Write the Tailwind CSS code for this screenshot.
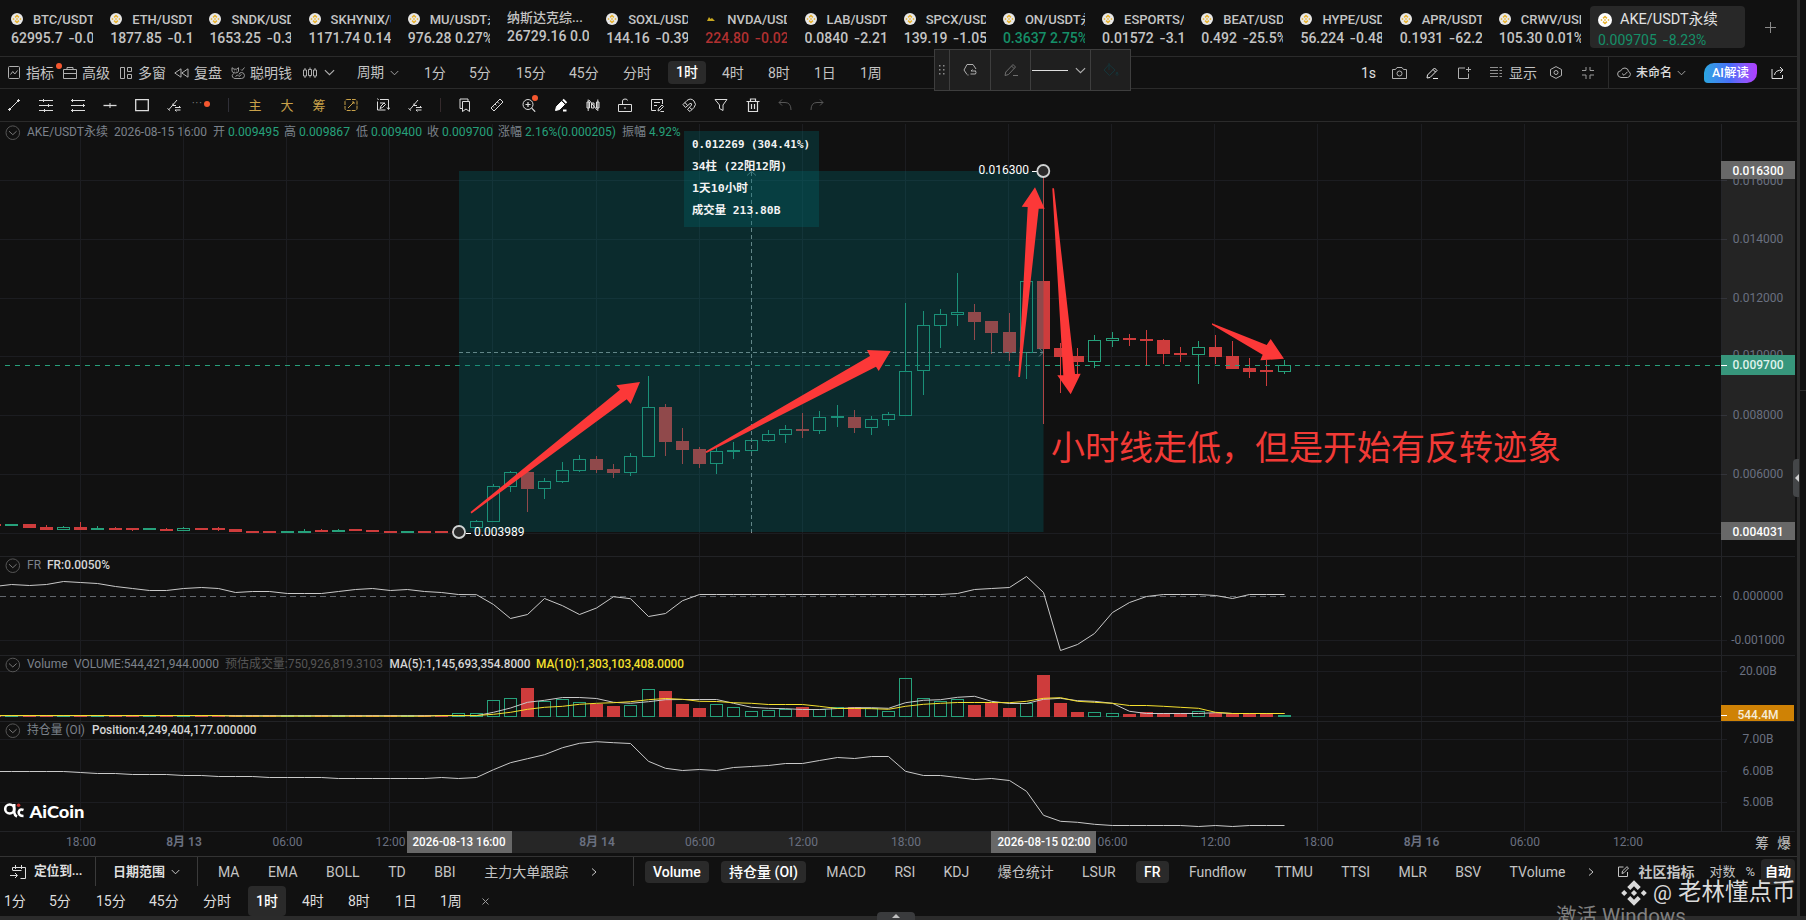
<!DOCTYPE html>
<html lang="zh-CN">

<head>
    <meta charset="UTF-8" />
    <meta name="viewport" content="width=device-width, initial-scale=1.0" />
    <title>AKE/USDT永续 - AiCoin</title>
    <script src="https://cdn.jsdelivr.net/npm/@tailwindcss/browser@4"></script>
</head>

<body class="w-[1806px] h-[920px] overflow-hidden bg-[#111111] text-[#c4c4c4] text-sm leading-none font-[family-name:Roboto,'Noto_Sans_CJK_SC',sans-serif]">
    <svg class="hidden">
        <symbol id="bnb" viewBox="0 0 24 24">
            <path d="M12 1 6.2 6.8 8.8 9.4 12 6.2l3.2 3.2 2.6-2.6zM12 23l-5.8-5.8 2.6-2.6 3.2 3.2 3.2-3.2 2.6 2.6zM3.6 9.4 1 12l2.6 2.6L6.2 12zM20.4 9.4 17.8 12l2.6 2.6L23 12zM12 9.4 9.4 12l2.6 2.6 2.6-2.6z" />
        </symbol>
        <symbol id="down" viewBox="0 0 10 6">
            <path d="M.8.8 5 5 9.2.8" fill="none" stroke="currentColor" />
        </symbol>
    </svg>

    <div class="relative flex w-[1806px] h-[920px]">
        <main class="w-[1797px] h-[916px] shrink-0 flex flex-col">

            <!-- symbol tabs -->
            <div class="flex h-[57px] shrink-0 border-b border-[#2b2b2b]">
                <div id="tabs" class="flex pl-[11px]"></div>
                <div class="w-[155px] h-[42px] mt-1.5 -ml-[8px] shrink-0 rounded bg-[#282828] pl-2 pt-1.5 whitespace-nowrap">
                    <div class="flex items-center h-4 text-[#e2e2e2]">
                        <span class="size-3.5 rounded-full bg-white flex items-center justify-center"><svg class="size-2.5 fill-[#e8b22c]"><use href="#bnb" /></svg></span>
                        <span class="ml-2 text-[14.5px]">AKE/USDT永续</span>
                    </div>
                    <div class="mt-1 h-4 leading-4 text-[#158f68]">0.009705 <span class="ml-0.5 font-[family-name:Inter]">-</span>8.23%</div>
                </div>
                <svg class="ml-5 mt-[22px] size-[11px] stroke-[#8a8a8a] fill-none" viewBox="0 0 11 11"><path d="M5.5 0v11M0 5.5h11" /></svg>
            </div>

            <!-- main toolbar -->
            <div class="flex items-center h-8 shrink-0 border-b border-[#2b2b2b] whitespace-nowrap">
                <div class="flex items-center w-[63px] pl-2 relative">
                    <svg class="w-3 h-[13px] mr-1.5 fill-none stroke-[#b0b0b0]" viewBox="0 0 12 13"><rect x=".5" y=".5" width="11" height="12" rx="1" /><path d="m2.5 8.5 2.3-3 2 2.5 2.7-3.5" /></svg>指标
                    <span class="absolute left-14 -top-[3px] size-1.5 rounded-full bg-[#f5572f]"></span>
                </div>
                <div class="flex items-center w-[57px]">
                    <svg class="w-3.5 h-3 mr-[5px] fill-none stroke-[#b0b0b0]" viewBox="0 0 14 12"><path d="M.5 2.5h13v9H.5zM4 2.5V.5h6v2M.5 6.5h13" /></svg>高级
                </div>
                <div class="flex items-center w-[54px]">
                    <svg class="w-3 h-3 mr-[6px] fill-none stroke-[#b0b0b0]" viewBox="0 0 12 12"><path d="M.5.5h4v11h-4zM7.5.5h4v4h-4zM7.5 7.5h4v4h-4z" /></svg>多窗
                </div>
                <div class="flex items-center w-[57px]">
                    <svg class="w-[15px] h-2.5 mr-[5px] fill-none stroke-[#b0b0b0]" viewBox="0 0 15 10"><path d="M7 .8v8.4L.8 5zM14 .8v8.4L7.8 5z" /></svg>复盘
                </div>
                <div class="flex items-center w-[72px]">
                    <svg class="w-3.5 h-3 mr-[5px] fill-none stroke-[#9a9a9a]" viewBox="0 0 14 12"><path d="M1 4V.7L3 2.200h2.500L7.500.7V4q0 2-3.200 2T1 4M3 4h.6M5 4h.6M10 2.500l1 1 2.500-3M2.500 6.500Q.5 8.500 1.500 10t2.500 1.500h6.500q3 0 3-3.200-.5-2.800-3-2.800-2 0-2.500 2" /><path d="m4.500 9.500 2-1.500L8 9.500 10.500 7.500" /></svg>聪明钱
                </div>
                <svg class="w-3.5 h-3 fill-none stroke-[#b0b0b0]" viewBox="0 0 14 12"><path d="M.5 3h3v6h-3zM5.500 2.500h3v6h-3zM10.500 3h3v6h-3zM2 1v2M2 9v2M7 .500v2M7 8.500v2M12 1v2M12 9v2" /></svg>
                <svg class="w-[11px] h-[7px] ml-[7px] text-[#b0b0b0]"><use href="#down" /></svg>
                <span class="ml-[22px] text-[13.5px]">周期</span>
                <svg class="w-[9px] h-1.5 ml-1.5 text-[#b0b0b0]"><use href="#down" /></svg>
                <div class="flex items-center ml-[25px]">
                    <span class="w-[45px]">1分</span><span class="w-[47px]">5分</span><span class="w-[53px]">15分</span><span class="w-[54px]">45分</span><span class="w-[45px]">分时</span>
                    <span class="w-[38px] h-[23px] leading-[22px] rounded bg-[#2a2a2a] text-white font-medium text-center">1时</span>
                    <span class="ml-4 w-[46px]">4时</span><span class="w-[46px]">8时</span><span class="w-[46px]">1日</span><span>1周</span>
                </div>
                <div class="flex items-center ml-auto h-full">
                    <span class="w-[31px] text-[#e0e0e0]">1s</span>
                    <svg class="w-[15px] h-3 fill-none stroke-[#b0b0b0]" viewBox="0 0 15 12"><path d="M.5 2.500h3l1.500-2h5l1.500 2h3v9H.5z" /><circle cx="7.500" cy="6.500" r="2.500" /></svg>
                    <svg class="w-3 h-3 ml-[19px] fill-none stroke-[#e8e8e8]" viewBox="0 0 12 12"><path d="M1 11 1.500 8 8.500 1l2.500 2.500-7 7zM7 2.500 9.500 5M7 11.500h5" /></svg>
                    <svg class="w-[13px] h-3 ml-5 fill-none stroke-[#b0b0b0]" viewBox="0 0 13 12"><path d="M7 1H.5v10.500h10V6.500M10.500 0v5M8 2.500h5" /></svg>
                    <svg class="w-3 h-[11px] ml-[19px] fill-none stroke-[#8f8f8f]" viewBox="0 0 12 11"><path d="M0 .5h8M0 3.500h8M0 6.500h8M0 9.500h8M9.500 .5H12M9.500 3.500H12M9.500 6.500H12M9.500 9.500H12" /></svg>
                    <span class="ml-[7px]">显示</span>
                    <svg class="w-3 h-[13px] ml-[13px] fill-none stroke-[#b0b0b0]" viewBox="0 0 12 13"><path d="M6 .6 11.500 3.500v6L6 12.400.5 9.500v-6z" /><circle cx="6" cy="6.500" r="2" /></svg>
                    <svg class="w-3 h-3 ml-5 fill-none stroke-[#9a9a9a]" viewBox="0 0 12 12"><path d="M0 3.500h4V0M8 0v3.500h4M12 8H8v4M4 12V8H0" /></svg>
                    <div class="flex items-center h-full ml-[14px] pl-2 border-l border-[#2b2b2b]">
                        <svg class="w-3.5 h-3 fill-none stroke-[#b0b0b0]" viewBox="0 0 14 12"><path d="M4 10.500Q.6 10 .6 7t3.200-3.200Q5 .8 8 1q3.200.3 3.600 3.500 2 .8 1.800 3-.4 2.600-2.900 3zM5 6.500l2 1.800 3.500-3.500" /></svg>
                        <span class="ml-[5px] text-xs font-medium text-[#dedede]">未命名</span>
                        <svg class="w-[9px] h-1.5 ml-[5px] text-[#b0b0b0]"><use href="#down" /></svg>
                        <span class="ml-[18px] w-[53px] h-5 leading-5 rounded-tl-[10px] rounded-br-[10px] rounded-tr-sm rounded-bl-sm bg-linear-to-r from-[#2aa5e0] via-[#4a6cf8] to-[#b03cff] text-white text-center text-[12.500px] font-medium">AI解读</span>
                        <svg class="w-[13px] h-3 ml-3.5 mr-[13px] fill-none stroke-[#e0e0e0]" viewBox="0 0 13 12"><path d="M1 2v9.500h10.500V8M3.500 8q.5-5 8-5M9 0l3 3-3 3" /></svg>
                    </div>
                </div>
            </div>

            <!-- drawing toolbar -->
            <div class="h-[33px] shrink-0 border-b border-[#2b2b2b] flex items-center pl-px text-[#dcdcdc] [&>svg]:size-3.5 [&>svg]:mr-[18px] [&>svg]:shrink-0 [&>svg]:fill-none [&>svg]:stroke-current [&>b]:w-8 [&>b]:font-normal [&>b]:text-[#c9a24a] [&>b]:text-[13px] [&>b]:text-center">
                <svg class="ml-1.5" viewBox="0 0 14 14"><path d="M2.500 11.500 11.500 2.500M1 11.500h3M2.500 10v3M10 2.500h3M11.500 1v3" /></svg>
                <svg viewBox="0 0 14 14"><path d="M0 2.500h14M0 7.500h14M0 12.500h14M4.500 1v3M9.500 6v3M5.500 11v3" /></svg>
                <svg viewBox="0 0 14 14"><path d="M0 2.500h14M0 7.500h14M0 12.500h14M1.500 1v3M12.500 6v3M1.500 11v3" /></svg>
                <svg viewBox="0 0 14 14"><path d="M.5 7.500h13" stroke-width="1.300" /><path d="M7 5v5" /></svg>
                <svg viewBox="0 0 14 14"><path d="M.7 1.700h12.600v11H.7z" stroke-width="1.300" /></svg>
                <svg viewBox="0 0 14 14"><path d="M2 11.500 10 2M.5 10.500l2.500 2M6 5.500v2h3M8 9.500h5.500l-1.500-1.500M13.500 12H8l1.500 1.500" /></svg>
                <div class="relative w-8 h-3.5 -ml-2 mr-1.5"><span class="absolute left-px top-0 tracking-[1px] text-[10px] leading-3 text-[#8a8a8a]">···</span><span class="absolute left-[13px] top-[3px] size-1.5 rounded-full bg-[#f5572f]"></span></div>
                <span class="w-px h-3.5 bg-[#303038] mr-2.5 -ml-[1px]"></span>
                <b>主</b><b>大</b><b>筹</b>
                <svg class="ml-[9px] text-[#c9a24a]" viewBox="0 0 14 14"><rect x="1" y="1.500" width="12" height="11" rx="2" stroke-dasharray="4 1" /><path d="m4 10 6-6M8 4h2v2" /></svg>
                <svg viewBox="0 0 14 14"><path d="M4 1.500h8.500V11M1.500 3.500V12h8M2.500 2 1.500.5M4 5h5M4 10.500l1-2.500 3-3 1.500 1.500-3 3zM11 9.500l1.500 2 1.500-2" /></svg>
                <svg viewBox="0 0 14 14"><path d="M2 11.500 10 2M.5 10.500l2.500 2M6 5.500v2h3M8 9.500h5.500l-1.500-1.500M13.500 12H8l1.500 1.500" /></svg>
                <span class="w-px h-3.5 bg-[#352a2c] mr-[17px]"></span>
                <svg viewBox="0 0 14 14"><path d="M4.500 3.500h7v10L8 11l-3.500 2.500zM4 10.500H2V1h8v2" /></svg>
                <svg viewBox="0 0 14 14"><path d="M1 10 10 1l3 3-9 9zM5 6l1.500 1.500M7.500 4 9 5.500M3 8.500 4 9.500" /></svg>
                <span class="relative mr-[18px]"><svg class="size-3.5 fill-none stroke-current" viewBox="0 0 14 14"><circle cx="6" cy="6.500" r="5" /><path d="m9.700 10.200 3.500 3.500M3.500 6.500h5M6 4v5" stroke-width="1.200" /></svg><span class="absolute left-[10px] -top-[3px] size-1.5 rounded-full bg-[#f5572f]"></span></span>
                <svg class="text-white" viewBox="0 0 14 14"><path d="M1.500 12.500 2.500 8.500l5-5L10.500 6.500l-5 5z" fill="currentColor" /><path d="M9 12.500h3.500M9 1.500l3.500 3.500" stroke-width="2" /></svg>
                <svg viewBox="0 0 14 14"><path d="M1 4h2.500v6H1zM5.500 5H8v5H5.500zM10.500 4H13v6h-2.500zM2.200 1.500V13M11.800 1.500V13M3 2l8 10" /></svg>
                <svg viewBox="0 0 14 14"><path d="M.5 6.500h13v7H.5zM4.500 6V3q0-2 2.500-2t2.500 1.500M7 9v2" /></svg>
                <svg viewBox="0 0 14 14"><path d="M12.500 6V1.500h-11v11H6M4 4.500h6M4 7.500h3M8 13l.5-2.500L12 7l1.500 1.500L10 12zM10.500 13.500H14" /></svg>
                <svg viewBox="0 0 14 14"><path d="M1 6.500 5 2.500q4-3 7 .5t0 6.500L8 13.500 5.500 11.500l4-4.500q.5-2-1.500-1.500L3.500 9.500zM3 4.500l2.500 3M7.500 9.500l2.500 2" /></svg>
                <svg viewBox="0 0 14 14"><path d="M1 1.500h12L9 7v5.500L5.500 10.500V7z" /></svg>
                <svg viewBox="0 0 14 14"><path d="M.5 3.500h13M2.500 3.500v10h9v-10M4.500 3V1h5v2M5.500 6v5M8.500 6v5" stroke-width="1.200" /></svg>
                <svg class="text-[#565656]" viewBox="0 0 14 14"><path d="M4 1.500 1 4.500l3 3M1 4.500h6q6 0 6 7.500" /></svg>
                <svg class="text-[#565656]" viewBox="0 0 14 14"><path d="m10 1.500 3 3-3 3M13 4.500H7q-6 0-6 7.500" /></svg>
            </div>

            <!-- chart area, drawn by the script below -->
            <svg id="chart" class="block w-[1797px] h-[734px] shrink-0 text-xs" viewBox="0 122 1797 734"></svg>

            <!-- indicator bar -->
            <div class="flex items-center h-[30px] shrink-0 border-t border-[#333333] whitespace-nowrap">
                <div class="flex items-center w-[96px] h-full pl-2.5 border-r border-[#3a3a3a] text-[#dedede] font-bold text-[13px]">
                    <svg class="w-4 h-3.5 mr-2 fill-none stroke-current" viewBox="0 0 16 14"><path d="M2.500 5V2.500h13v11h-5M5.500 0v4M11.500 0v4M2.500 5.500h9M0 10.500h7M5 8l2.500 2.500L5 13" /></svg><span class="text-[12.800px] tracking-[-0.2px]">定位到...</span>
                </div>
                <div class="flex items-center w-[102px] h-full pl-[17px] border-r border-[#3a3a3a] text-[#dedede] font-bold text-[13px]">
                    日期范围<svg class="w-[9px] h-1.5 ml-1.5"><use href="#down" /></svg>
                </div>
                <div class="flex items-center gap-[28.600px] w-[436px] h-full pl-[20px] border-r border-[#3a3a3a]">
                    <span>MA</span><span>EMA</span><span>BOLL</span><span>TD</span><span>BBI</span><span>主力大单跟踪</span>
                    <svg class="w-1.5 h-2 -ml-1.5 fill-none stroke-current" viewBox="0 0 6 8"><path d="m1 .5 4 3.500-4 3.500" /></svg>
                </div>
                <div class="flex items-center gap-[28.400px] pl-[19px]">
                    <span class="-mx-2 px-2 h-[22px] leading-[22px] rounded bg-[#2a2a2a] text-white font-medium">Volume</span>
                    <span class="-mx-2 px-2 h-[22px] leading-[22px] rounded bg-[#2a2a2a] text-white font-medium">持仓量 (OI)</span>
                    <span>MACD</span><span>RSI</span><span>KDJ</span><span>爆仓统计</span><span>LSUR</span>
                    <span class="-mx-2 px-2 h-[22px] leading-[22px] rounded bg-[#2a2a2a] text-white font-medium">FR</span>
                    <span>Fundflow</span><span>TTMU</span><span>TTSI</span><span>MLR</span><span>BSV</span><span>TVolume</span>
                    <svg class="w-1.5 h-2 -ml-1.5 fill-none stroke-current" viewBox="0 0 6 8"><path d="m1 .5 4 3.500-4 3.500" /></svg>
                </div>
                <div class="flex items-center ml-auto pr-0.5">
                    <svg class="w-[11px] h-[11px] mr-[9px] fill-none stroke-current" viewBox="0 0 11 11"><path d="M5.500 1H.5v9.500h9V6M4 7.500 4.500 5 9 .7 10.500 2 6 6.700z" /></svg>
                    <span class="font-bold">社区指标</span>
                    <span class="ml-[15px] text-[13px]">对数</span>
                    <span class="ml-[10px] text-[13px]">%</span>
                    <span class="ml-[6px] w-[34px] h-[26px] leading-[26px] rounded bg-[#262626] text-white font-bold text-[13px] text-center">自动</span>
                </div>
            </div>

            <!-- period bar -->
            <div class="flex items-center h-[30px] shrink-0 pl-1 text-[#dedede] whitespace-nowrap">
                <span class="w-[45px]">1分</span><span class="w-[47px]">5分</span><span class="w-[53px]">15分</span><span class="w-[54px]">45分</span><span class="w-[45px]">分时</span>
                <span class="w-[38px] h-[30px] leading-[30px] rounded bg-[#2a2a2a] text-white font-medium text-center">1时</span>
                <span class="ml-4 w-[46px]">4时</span><span class="w-[47px]">8时</span><span class="w-[45px]">1日</span><span class="w-[42px]">1周</span>
                <svg class="size-[7px] fill-none stroke-[#9a9a9a]" viewBox="0 0 7 7"><path d="m.5.5 6 6M6.500.5l-6 6" /></svg>
            </div>
        </main>

        <!-- collapsed side panel -->
        <div class="w-[3px] h-full bg-[#2b2b2b]"></div>
        <div class="w-1.5 h-[391px] border-b border-[#2b2b2b]"></div>
        <div class="absolute left-0 top-[916px] w-full h-1 bg-[#2b2b2b]"></div>
        <div class="absolute left-[1793px] top-[459px] w-1.5 h-[38px] rounded-l bg-[#444648] flex items-center justify-end">
            <svg class="w-1 h-2 fill-[#d0d0d0]" viewBox="0 0 4 8"><path d="M4 0v8L0 4z" /></svg>
        </div>
        <div class="absolute left-[877px] top-[912px] w-[38px] h-2 rounded-t bg-[#3a3b3d] flex items-center justify-center">
            <svg class="w-2 h-1 fill-[#c0c0c0]" viewBox="0 0 8 4"><path d="M0 4h8L4 0z" /></svg>
        </div>

        <!-- floating style bar of the selected drawing -->
        <div class="absolute left-[934px] top-[49px] w-[197px] h-[42px] flex border border-[#3e3e3e] bg-[#1f1f1f] [&>div]:flex [&>div]:items-center [&>div]:justify-center [&>div]:border-[#3e3e3e] [&>div]:border-r">
            <div class="w-[15px]"><svg class="w-1.5 h-2.5 fill-[#8a8a8a]" viewBox="0 0 6 10"><path d="M0 0h1.500v1.500H0zM4 0h1.500v1.500H4zM0 4h1.500v1.500H0zM4 4h1.500v1.500H4zM0 8h1.500v1.500H0zM4 8h1.500v1.500H4z" /></svg></div>
            <div class="w-[41px]"><svg class="size-3.5 fill-none stroke-[#b0b0b0]" viewBox="0 0 14 14"><path d="M4 11.500 1 7l3-5.500h6L13 6M5 11.500v1M13 8H8l1.500-1.500M7.500 11h5q1-1.500 0-3" /></svg></div>
            <div class="w-[40px]"><svg class="size-3.5 fill-none stroke-[#6e6e6e]" viewBox="0 0 14 14"><path d="m1 12.500.8-3.500L9 1.500 11.500 4l-7 7.500zM7.500 3 10 5.500M9 12.500h5" /></svg></div>
            <div class="w-[60px]"><span class="w-9 h-px -ml-1 bg-[#dedede]"></span><svg class="w-[11px] h-[7px] ml-[7px] text-[#b0b0b0]"><use href="#down" /></svg></div>
            <div class="grow border-r-0!"><svg class="w-4 h-3.5 fill-none stroke-[#153439]" viewBox="0 0 16 14"><path d="M6 1.500 12 7l-5.500 5.500L1 7zM6 7V0M14 9q-2 3 0 3.500 2-.5 0-3.500" /></svg></div>
        </div>

        <div class="absolute left-[1620px] top-[879px] flex items-center h-7 text-[#dadada] text-[23.500px] whitespace-nowrap">
            <svg class="size-7 fill-current mr-[5px]"><use href="#bnb" /></svg>
            <span class="w-[25px] text-[21px]">@</span><span>老林懂点币</span>
        </div>
        <div class="absolute left-[1556px] top-[904px] text-[20.500px] leading-6 text-[#808080] whitespace-nowrap">激活 Windows</div>
    </div>

    <script>
        // name, last price, sign of the change, change, colour class, icon
        const tabs = [
            ["BTC/USDT永续", "62995.7", "-", "0.02%"],
            ["ETH/USDT永续", "1877.85", "-", "0.10%"],
            ["SNDK/USDT永续", "1653.25", "-", "0.35%"],
            ["SKHYNIX/USDT", "1171.74", "", "0.14%"],
            ["MU/USDT永续", "976.28", "", "0.27%"],
            ["纳斯达克综...", "26729.16", "", "0.01%", "", "none"],
            ["SOXL/USDT永续", "144.16", "-", "0.39%"],
            ["NVDA/USDT永续", "224.80", "-", "0.02%", "text-[#b03030]", "small"],
            ["LAB/USDT永续", "0.0840", "-", "2.21%"],
            ["SPCX/USDT永续", "139.19", "-", "1.05%"],
            ["ON/USDT永续", "0.3637", "", "2.75%", "text-[#158f68]"],
            ["ESPORTS/USDT", "0.01572", "-", "3.12%"],
            ["BEAT/USDT永续", "0.492", "-", "25.5%"],
            ["HYPE/USDT永续", "56.224", "-", "0.48%"],
            ["APR/USDT永续", "0.1931", "-", "62.2%"],
            ["CRWV/USDT永续", "105.30", "", "0.01%"],
        ];
        const icons = {
            bnb: `<span class="size-3 mr-[10px] shrink-0 rounded-full bg-[#e8e8e8] flex items-center justify-center"><svg class="size-2.5 fill-[#e8b22c]"><use href="#bnb" /></svg></span>`,
            small: `<svg class="w-2 h-1 ml-0.5 mr-[12px] shrink-0 fill-[#c8a820]" viewBox="0 0 8 4"><path d="m0 4 2-4 1.500 2L5 1l3 3z" /></svg>`,
            none: "",
        };
        document.getElementById("tabs").innerHTML = tabs.map(([name, price, sign, change, color = "", icon = "bnb"]) => `
            <div class="w-[99.200px] shrink-0">
                <div class="w-[82px] overflow-hidden whitespace-nowrap font-medium ${icon === "none" ? "pt-[9px]" : "pt-[11px]"}">
                    <div class="flex items-center h-4 text-[13px]">${icons[icon]}<span>${name}</span></div>
                    <div class="mt-[3px] h-4 leading-4 ${color}">${price} ${sign ? `<span class="ml-0.5 font-[family-name:Inter]">-</span>` : ""}${change}</div>
                </div>
            </div>`).join("");

        const GREEN = "#26a17b", RED = "#ce3c3c", MUTED = "#6a7080";
        const out = [];
        const cx = (i) => Math.floor(493.3 + 17.19 * i);
        const line = (x1, y1, x2, y2, color, extra = "") =>
            out.push(`<path d="M${x1} ${y1}L${x2} ${y2}" stroke="${color}" ${extra}/>`);
        const rect = (x, y, w, h, fill, extra = "") =>
            out.push(`<rect x="${x}" y="${y}" width="${w}" height="${h}" fill="${fill}" ${extra}/>`);
        const text = (x, y, s, color, extra = "") =>
            out.push(`<text x="${x}" y="${y}" fill="${color}" ${extra}>${s}</text>`);
        const W = (w) => `textLength="${w}" lengthAdjust="spacingAndGlyphs"`;
        const MID = `text-anchor="middle"`, MED = `font-weight="500"`;

        // grid
        for (const y of [180, 239, 298, 356, 415, 474, 533, 640, 671, 716, 739, 771, 802])
            line(0, y + .5, 1727, y + .5, "#1c1d21");
        for (const x of [80, 183, 286, 389, 492, 596, 699, 802, 905, 1008, 1111, 1214, 1317, 1421, 1524, 1627])
            line(x + .5, 124, x + .5, 831, "#1c1d21");
        line(1721.5, 124, 1721.5, 831, "#232428");
        for (const y of [556, 655, 721, 831]) line(0, y + .5, 1795, y + .5, "#222326");

        // candles: colour, high, open/close top, open/close bottom, low
        const candles = [
            "r524,524,526,526", "g524,524,526,526", "r524,524,528,528", "r525,527,530,530", "g526,527,530,530", "r522,527,530,530",
            "g526,528,530,530", "r527,528,530,530", "r528,528,530,531", "g528,528,530,530", "r528,529,531,531",
            "g527,528,531,531", "r528,528,530,530", "r527,528,530,531", "r529,529,532,532", "r531,531,533,533",
            "r531,531,533,533", "g531,531,533,533", "g529,531,533,533", "r529,530,532,532", "g529,530,532,532",
            "r529,529,531,531", "r530,530,532,532", "r531,531,533,533", "g531,531,533,533", "r531,531,533,533",
            "r531,531,533,533", "r531,531,533,533", "g520,521,528,528",
            "g484,486,522,522", "g471,472,487,492", "r472,472,489,512", "g478,481,489,499", "g462,470,482,483",
            "g455,459,471,472", "r456,459,470,473", "r464,469,473,478", "g453,456,473,476", "g376,407,457,457",
            "r404,407,442,456", "r428,441,450,464", "r447,449,464,468", "g448,451,464,474", "g442,450,452,459",
            "g438,440,451,452", "g430,434,441,442", "g425,429,435,443", "r413,429,431,438", "g411,417,431,434",
            "g405,416,418,427", "r410,417,428,433", "g416,419,428,435", "g412,414,420,426", "g303,371,416,416",
            "g311,325,371,395", "g309,314,326,348", "g273,312,315,326", "r304,312,322,340", "r321,321,333,354",
            "r313,332,353,361", "g281,281,353,379", "r177,281,349,424", "r343,348,357,393", "r348,356,362,375",
            "g335,340,362,368", "g332,338,341,347", "r334,338,340,346", "r330,339,341,365", "r339,340,354,364",
            "r347,353,355,362", "g341,347,355,384", "r335,347,357,364", "r341,356,369,369", "r358,368,372,378",
            "r360,370,372,386", "g360,365,372,374",
        ];
        candles.forEach((c, k) => {
            const x = cx(k - 29);
            const [hi, top, bot, lo] = c.slice(1).split(",").map(Number);
            const color = c[0] === "g" ? GREEN : RED;
            if (top > hi) rect(x, hi, 1, top - hi, color);
            if (lo > bot) rect(x, bot, 1, lo - bot, color);
            if (c[0] === "g" && bot - top > 2) rect(x - 5.5, top + .5, 12, bot - top - 1, "none", `stroke="${color}"`);
            else rect(x - 6, top, 13, bot - top, color);
        });
        line(5, 365.5, 1721, 365.5, GREEN, `stroke-dasharray="5 5"`);

        // measured range
        line(751.5, 172, 751.5, 533, "#8d9393", `stroke-dasharray="4 3"`);
        line(459, 352.5, 1043, 352.5, "#8d9393", `stroke-dasharray="4 3"`);
        out.push(`<path d="M747 175.500l4.500-4 4.500 4M1039 348l4 4.500-4 4" fill="none" stroke="#7d8383"/>`);
        rect(459, 171, 584.5, 361, "#00696f", `fill-opacity=".3"`);
        rect(684, 131, 135, 96, "#00696f", `fill-opacity=".3"`);
        const mono = `font-weight="700" font-size="11" font-family="'DejaVu Sans Mono','Noto Sans CJK SC',monospace"`;
        text(692, 148, "0.012269 (304.41%)", "#f4f4f4", `${mono} ${W(118)}`);
        text(692, 170, "34柱 (22阳12阴)", "#f4f4f4", `${mono} ${W(95)}`);
        text(692, 192, "1天10小时", "#f4f4f4", `${mono} ${W(56)}`);
        text(692, 214, "成交量 213.80B", "#f4f4f4", `${mono} ${W(88.500)}`);
        line(466, 533.5, 471, 533.5, "#fff");
        line(1032, 171.5, 1037, 171.5, "#fff");
        text(474, 536, "0.003989", "#fff");
        text(978.5, 174, "0.016300", "#fff");
        for (const [x, y] of [[459, 532], [1043.3, 171]])
            out.push(`<circle cx="${x}" cy="${y}" r="6" fill="#2a2a2a" stroke="#cfd2d2" stroke-width="1.800"/>`);

        // arrows and note
        const arrows = [
            "470.500,512 620,389.700 616.300,385.300 640,382 630.700,404 626.700,399.300 471.500,513.500",
            "705.500,451.500 870,356 867,350 890.700,351 878.700,371 876,366.700 706.500,453",
            "1018.300,377 1027.700,207 1021.700,206.700 1035,187.300 1044.700,208.700 1038.700,208.700 1020,377",
            "1052.300,188.300 1063.300,375.300 1057.300,375.300 1070.700,394.300 1080.700,373.700 1075,374 1054,188.300",
            "1212,323.300 1266.700,345 1270.700,339 1284,358.700 1260.300,360.300 1262.700,354.700 1212,324.800",
        ];
        for (const p of arrows) out.push(`<polygon points="${p}" fill="#fc3838"/>`);
        text(1051, 460, "小时线走低，但是开始有反转迹象", "#f23a36", `font-size="34"`);

        // sub charts, one y value per bar
        const plot = (ys, color) =>
            out.push(`<polyline fill="none" stroke="${color}" points="${ys.map((y, k) => `${cx(k - 29) + .5},${y}`).join(" ")}"/>`);
        const rep = (v, n) => Array(n).fill(v);

        line(0, 596.5, 1721, 596.5, "#62676d", `stroke-dasharray="6 4"`);
        plot([586.5, 584.5, 585.5, 584.5, 581.5, 582.5, 583.5, 586.5, 588.5, 590.5, 590.5, 588.5, 587.5, 588.5, 592.5, 591.5, 591.5,
            593.5, 593.5, 593.5, 591.5, 589.5, 588.5, 590.5, 589.5, 591.5, 592.5, 594.5, 594.7, 604.5, 618.5, 614.5, 598.5, 605.7,
            614.5, 608, 596.7, 598.7, 616.5, 613.5, 600.7, ...rep(594.5, 15), 593.5, 589.5, 588.5, 587.5, 576.5, 592.5, 650.5,
            644.5, 633.5, 612.5, 602.5, 596.5, 594.5, 594.5, 594.5, 595.5, 598.5, 594.5, 594.5, 594.5], "#c9c9c9");

        const volume = [...rep(715, 27), 713, 713, 700, 698, 688, 701, 699, 702, 704, 706, 705, 689, 691, 704, 708, 704, 707, 711, 710,
            709, 707, 709, 707, 707, 708, 711, 678, 698, 701, 699, 705, 703, 708, 703, 675, 703, 712, 712, 713, 714, 712, 713, 713,
            711, 713, 714, 714, 714, 715];
        volume.forEach((y, k) => {
            const x = cx(k - 29), up = candles[k][0] === "g" || k === 27;
            if (up && y < 715) rect(x - 5.5, y + .5, 12, 716 - y, "none", `stroke="${GREEN}"`);
            else rect(x - 6, y, 13, 717 - y, up ? GREEN : RED);
        });
        plot([...rep(715.7, 29), 712.3, 708, 702.3, 700.3, 697.5, 697.5, 698.5, 702.3, 703.3, 701.7, 699.7, 699.5, 699.5, 699.5, 703.3,
            707.3, 708.3, 708.7, 709.5, 709.5, 708.5, 707.7, 707.7, 708.3, 702.7, 700.3, 699.7, 697.3, 696.3, 701.3, 703.5, 703.5,
            699.3, 698.3, 700.7, 701.3, 703.3, 711.3, 713.5, 713.5, 713.5, 713.5, 712.7, ...rep(713.5, 4)], "#c9c9c9");
        plot([...rep(715.5, 14), ...rep(716.2, 12), ...rep(715.5, 3), 714.3, 712.3, 709.3, 707.3, 706.3, 704.3, 703.3, 702.7, 701.7, 699.7, 698.5, 699.3,
            701.3, 701.5, 702.7, 703.3, 704.5, 704.5, 704.5, 706.3, 708.5, 708.5, 708.7, 709.3, 706.3, 704.3, 703.3, 702.5, 702.5,
            702.5, 702.7, 701.3, 698.3, 697.7, 701.3, 702.3, 703.3, 705.5, 705.5, 706.3, 707.3, 708.3, 712.3, ...rep(713.5, 4)], "#f5e02e");

        plot([...rep(771.5, 5), 772.5, 773.5, 773.5, 774.5, 774.5, 774.5, 775.5, 775.5, 776.5, 776.5, 776.5, ...rep(777.5, 4),
            ...rep(778.5, 6), 777.5, 778.5, 777.5, 769.7, 762.7, 758.7, 754.7, 747.7, 743.3, 741.7, 742.7, 743.5, 761.3, 768.3,
            770.5, 769.5, 770.5, 767.5, 766.5, 765.5, 763.5, 763.5, 760.5, 757.5, 758.5, 756.5, 756.5, 771.3, 775.5, 775.5,
            777.5, 779.5, 778.5, 780.5, 791.3, 815.3, 821.3, 822.3, 824.3, ...rep(825.5, 5), 826.5, 825.5, 826.5, 825.5, 825.5, 825.5], "#c9c9c9");

        // legends
        for (const y of [132.7, 565.7, 665, 730.7])
            out.push(`<circle cx="12.800" cy="${y}" r="6.800" fill="none" stroke="#565656"/><path d="M9 ${y - 1.5}l3.800 3.500 3.800-3.500" fill="none" stroke="#767676"/>`);
        text(27, 136, "AKE/USDT永续", "#7c828b", W(81));
        text(114, 136, "2026-08-15 16:00", "#7c828b", W(93));
        [[213, "开", "0.009495", 51], [284, "高", "0.009867", 51], [356, "低", "0.009400", 51], [427, "收", "0.009700", 51],
        [498, "涨幅", "2.16%(0.000205)", 91], [622, "振幅", "4.92%", 31.5]].forEach(([x, label, value, w]) => {
            text(x, 136, label, "#7c828b");
            text(x + 3 + 12 * label.length, 136, value, GREEN, W(w));
        });
        text(27, 569, "FR", "#7c828b");
        text(47, 569, "FR:0.0050%", "#d6d6d6", `${MED} ${W(63)}`);
        text(27, 668, "Volume", "#7c828b", W(40.500));
        text(74, 668, "VOLUME:544,421,944.0000", "#7c828b", W(145));
        text(225, 668, "预估成交量:750,926,819.3103", "#565656", W(158));
        text(389.500, 668, "MA(5):1,145,693,354.8000", "#d6d6d6", `${MED} ${W(141)}`);
        text(536, 668, "MA(10):1,303,103,408.0000", "#f5e02e", `${MED} ${W(148)}`);
        text(27, 734, "持仓量 (OI)", "#7c828b", W(58));
        text(92, 734, "Position:4,249,404,177.000000", "#d6d6d6", `${MED} ${W(164.500)}`);

        // AiCoin logo
        out.push(`<circle cx="9.700" cy="809" r="4.500" fill="none" stroke="#fff" stroke-width="2.600"/><path d="M14.200 804v8.500q.5 3 2.800 4M23.500 810q-4-1.500-4.800 2-.2 4 4.800 4" fill="none" stroke="#fff" stroke-width="2.600"/><circle cx="18.600" cy="805.200" r="1.800" fill="#c9302c"/>`);
        text(29.500, 818, "AiCoin", "#fff", `font-family="Lato" font-size="17" font-weight="900" ${W(55)}`);

        // price axis
        rect(1722, 171, 73, 362, "#242424");
        for (const y of [180, 239, 298, 356, 415, 474]) line(1721, y + .5, 1727, y + .5, "#33343a");
        [[184.500, "0.016000"], [243, "0.014000"], [302, "0.012000"], [359, "0.010000"], [419, "0.008000"], [478, "0.006000"],
        [600, "0.000000"], [644, "-0.001000"], [675, "20.00B"], [743, "7.00B"], [775, "6.00B"], [806, "5.00B"]]
            .forEach(([y, s]) => text(1758, y, s, MUTED, MID));
        rect(1721, 161, 74, 18, "#686868");
        rect(1721, 355, 74, 20, "#37967c");
        rect(1721, 522, 74, 18, "#686868");
        rect(1721, 705, 73, 16, "#cf8205");
        line(1721, 365.5, 1727, 365.5, "#fff");
        line(1721, 715.5, 1727, 715.5, "#fff");
        text(1758, 175, "0.016300", "#fff", `${MID} ${MED}`);
        text(1758, 369, "0.009700", "#dff3ec", `${MID} ${MED}`);
        text(1758, 536, "0.004031", "#fff", `${MID} ${MED}`);
        text(1758, 719, "544.4M", "#f7ecd8", `${MID} ${MED}`);

        // time axis
        rect(512, 832, 479, 21, "#262626");
        [[81, "18:00"], [184, "8月 13"], [287.5, "06:00"], [390.5, "12:00"], [597, "8月 14"], [700, "06:00"], [803, "12:00"], [906, "18:00"],
        [1112.5, "06:00"], [1215.5, "12:00"], [1318.5, "18:00"], [1421.5, "8月 16"], [1525, "06:00"], [1628, "12:00"]]
            .forEach(([x, s]) => text(x, 846, s, MUTED, s.includes("月") ? `${MID} font-weight="600"` : MID));
        rect(407, 831, 105, 22, "#686868");
        rect(991, 831, 105, 22, "#686868");
        text(412.500, 846, "2026-08-13 16:00", "#fff", `${MED} ${W(93)}`);
        text(997.500, 846, "2026-08-15 02:00", "#fff", `${MED} ${W(93)}`);
        text(1762, 848, "筹", "#b5b5b5", `${MID} font-size="13.500" font-weight="500"`);
        text(1784, 848, "爆", "#b5b5b5", `${MID} font-size="13.500" font-weight="500"`);

        document.getElementById("chart").innerHTML = out.join("");
    </script>
</body>

</html>
